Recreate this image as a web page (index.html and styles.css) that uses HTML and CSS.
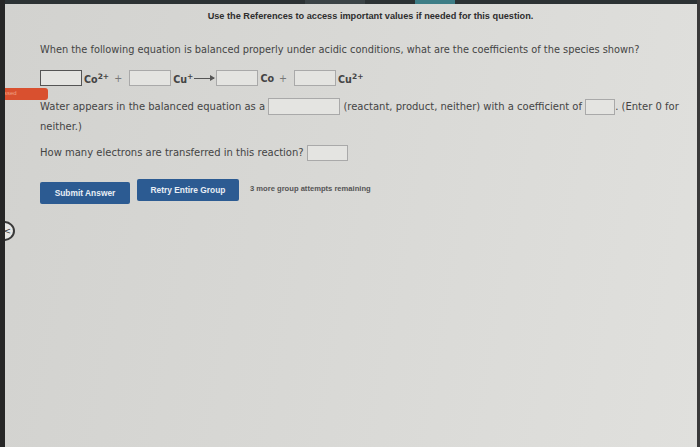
FILE: index.html
```html
<!DOCTYPE html>
<html>
<head>
<meta charset="utf-8">
<link rel="stylesheet" href="styles.css">
</head>
<body>
<div class="screen">
  <div class="topbar"><span class="tab-a"></span><span class="tab-b"></span></div>
  <div class="page">
    <p class="refs">Use the References to access important values if needed for this question.</p>
    <p class="q">When the following equation is balanced properly under acidic conditions, what are the coefficients of the species shown?</p>
    <div class="eq">
      <span class="box first"></span><span class="sp">Co<sup>2+</sup></span><span class="plus">+</span>
      <span class="box"></span><span class="sp">Cu<sup>+</sup></span><span class="arrow"></span>
      <span class="box"></span><span class="sp">Co</span><span class="plus">+</span>
      <span class="box"></span><span class="sp">Cu<sup>2+</sup></span>
    </div>
    <p class="line water">Water appears in the balanced equation as a <span class="box wide"></span> (reactant, product, neither) with a coefficient of <span class="box small"></span>. (Enter 0 for</p>
    <p class="line cont">neither.)</p>
    <p class="line elec">How many electrons are transferred in this reaction? <span class="box mid"></span></p>
    <div class="actions">
      <button class="btn submit">Submit Answer</button>
      <button class="btn retry">Retry Entire Group</button>
      <span class="remain">3 more group attempts remaining</span>
    </div>
  </div>
  <div class="tag">ssed</div>
  <div class="nav">&lt;</div>
</div>
</body>
</html>
```
FILE: styles.css
```css
html, body {
  margin: 0;
  padding: 0;
  width: 700px;
  height: 447px;
  overflow: hidden;
  background: #2a2a2a;
}
.screen {
  position: relative;
  width: 700px;
  height: 447px;
  box-sizing: border-box;
  border-left: 5px solid #262626;
  border-right: 3px solid #3a3a3a;
  background: linear-gradient(100deg, #d2d2cf 0%, #d8d8d5 45%, #e0e0dd 100%);
  font-family: "DejaVu Sans", Verdana, sans-serif;
  color: #3c3c3c;
  overflow: hidden;
}
.topbar {
  height: 4px;
  background: #2c3234;
  display: flex;
}
.tab-a {
  width: 60px;
  margin-left: 300px;
  background: #3b4346;
}
.tab-b {
  width: 40px;
  margin-left: 50px;
  background: #3d7d86;
}
.page {
  padding-left: 35px;
}
.refs {
  margin: 7px 0 0 0;
  text-align: center;
  font-family: "Liberation Sans", Arial, sans-serif;
  font-weight: bold;
  font-size: 9.2px;
  color: #2e2e2e;
  padding-left: 4px;
}
.q {
  margin: 23px 0 0 0;
  font-size: 9.8px;
  color: #444;
}
.eq {
  margin-top: 15px;
  display: flex;
  align-items: center;
  height: 16px;
  font-size: 9.6px;
  font-weight: bold;
  color: #444;
}
.box {
  display: inline-block;
  width: 40px;
  height: 14px;
  border: 1px solid #a9a9a9;
  background: #e4e4e1;
  vertical-align: middle;
}
.box.first {
  border-color: #555;
  margin-left: 0;
}
.sp sup {
  font-size: 7.5px;
  vertical-align: 4px;
}
.sp {
  margin-left: 2px;
}
.plus {
  font-weight: normal;
  color: #777;
  margin: 0 7px 0 5px;
}
.arrow {
  width: 20px;
  height: 1px;
  background: #555;
  position: relative;
  margin: 0 2px 0 1px;
}
.arrow::after {
  content: "";
  position: absolute;
  right: -1px;
  top: -3px;
  border-left: 5px solid #555;
  border-top: 3.5px solid transparent;
  border-bottom: 3.5px solid transparent;
}
.line {
  margin: 0;
  font-size: 10px;
  color: #444;
}
.water {
  margin-top: 12px;
}
.box.wide {
  width: 70px;
  height: 15px;
}
.box.small {
  width: 28px;
}
.box.mid {
  width: 39px;
}
.cont {
  margin-top: 6px;
}
.elec {
  margin-top: 13px;
}
.actions {
  margin-top: 18px;
  display: flex;
  align-items: center;
  gap: 7px;
}
.btn {
  border: none;
  border-radius: 2px;
  background: #2c5b92;
  color: #e8eef5;
  font-family: "Liberation Sans", Arial, sans-serif;
  font-weight: bold;
  font-size: 8.4px;
  height: 22px;
  padding: 0;
}
.submit {
  width: 90px;
  margin-top: 3px;
}
.retry {
  width: 102px;
  margin-top: -3px;
}
.remain {
  margin-left: 4px;
  margin-top: -6px;
  font-family: "Liberation Sans", Arial, sans-serif;
  font-weight: bold;
  font-size: 7.6px;
  color: #555;
}
.tag {
  position: absolute;
  left: -5px;
  top: 88px;
  width: 44px;
  height: 12px;
  padding-left: 4px;
  background: #d9502f;
  border-radius: 0 3px 3px 0;
  font-family: "Liberation Sans", Arial, sans-serif;
  font-size: 6px;
  line-height: 10px;
  color: #f0a080;
}
.nav {
  position: absolute;
  left: -12px;
  top: 221px;
  width: 16px;
  height: 16px;
  border: 2px solid #3a3a3a;
  border-radius: 50%;
  background: #e8e8e6;
  font-family: "DejaVu Sans", sans-serif;
  font-size: 9px;
  line-height: 16px;
  text-align: right;
  padding-right: 2px;
  box-sizing: content-box;
  color: #333;
}
```
